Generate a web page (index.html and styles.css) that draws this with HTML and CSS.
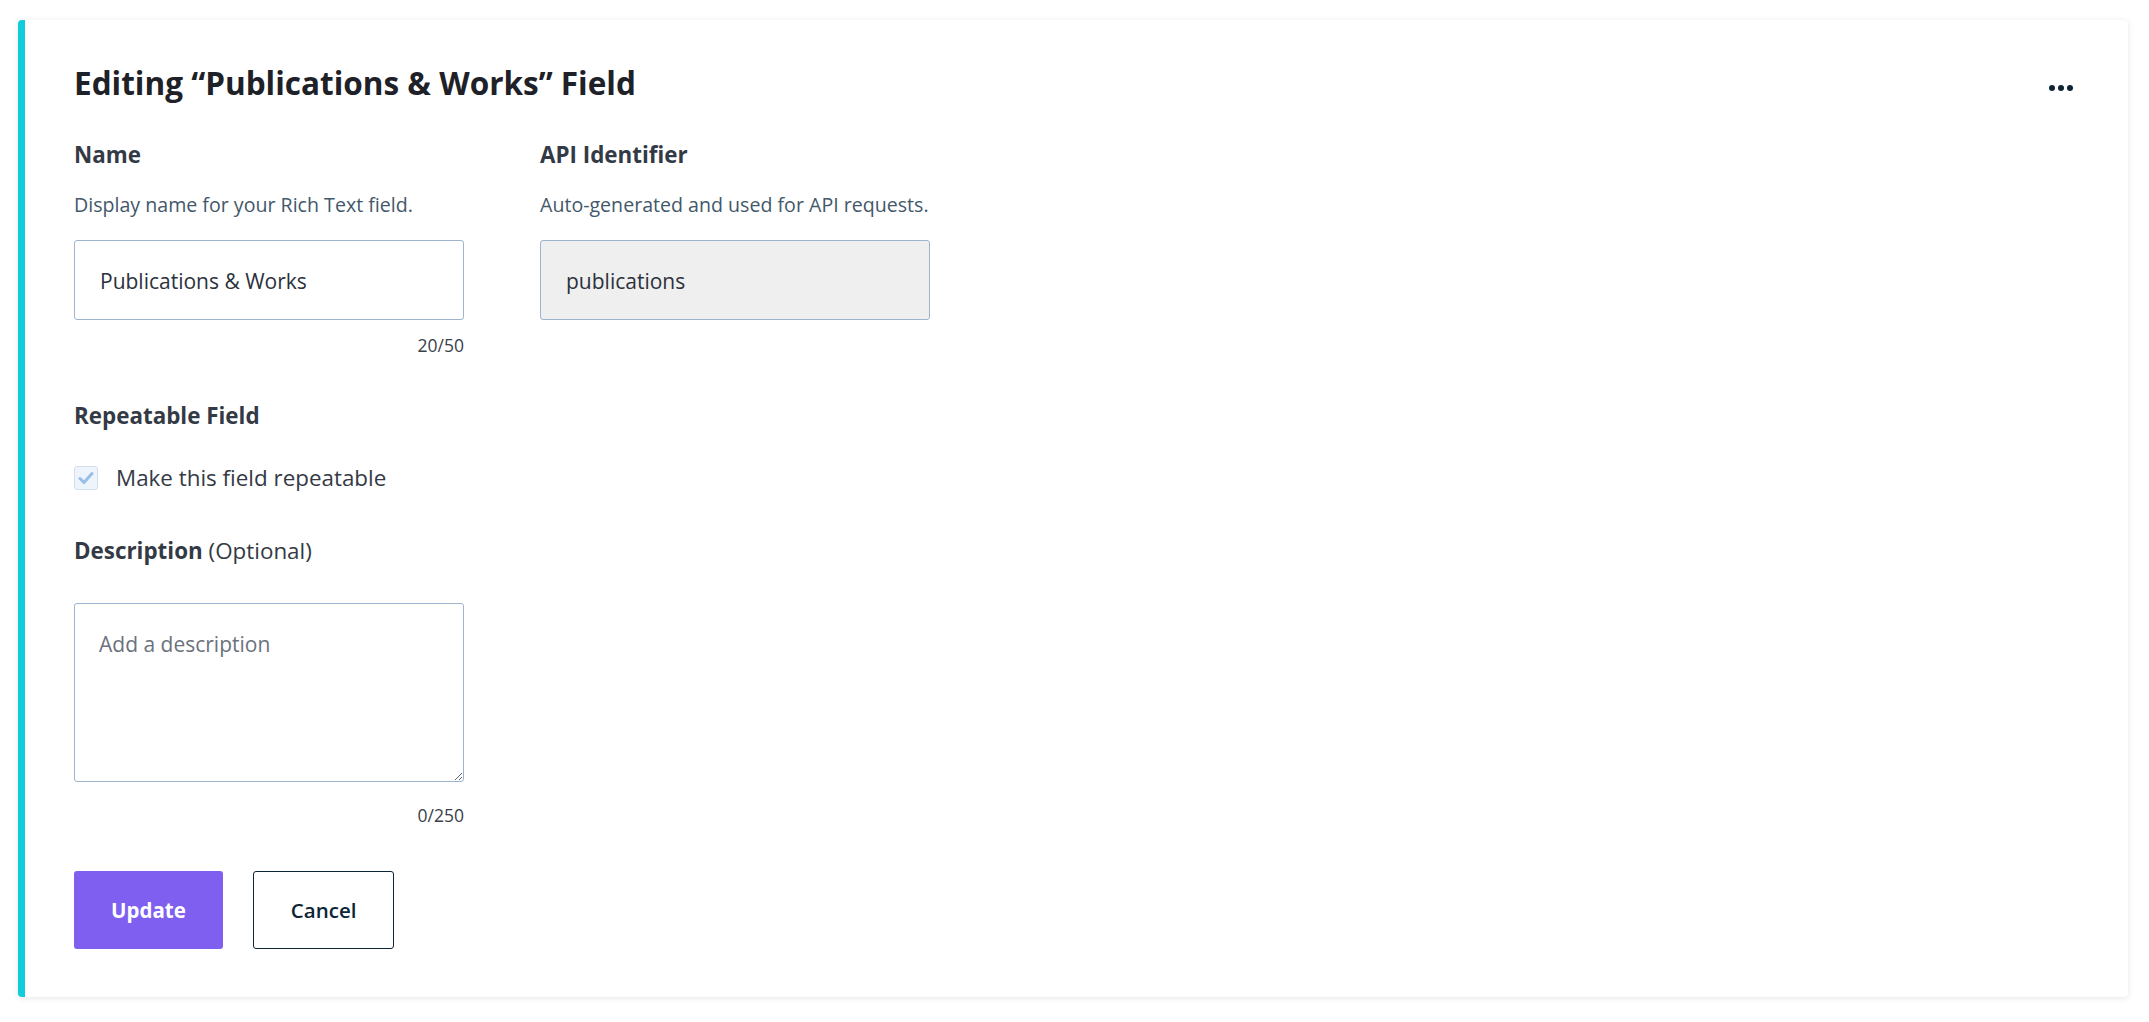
FILE: index.html
```html
<!DOCTYPE html>
<html lang="en">
<head>
<meta charset="utf-8">
<title>Editing Field</title>
<link rel="stylesheet" href="styles.css">
</head>
<body>
<div class="card">
  <div class="card-head">
    <h1 class="title">Editing “Publications &amp; Works” Field</h1>
    <button class="more" type="button" aria-label="More options">
      <svg width="24" height="6" viewBox="0 0 24 6"><circle cx="3" cy="3" r="3"/><circle cx="12" cy="3" r="3"/><circle cx="21" cy="3" r="3"/></svg>
    </button>
  </div>

  <div class="field-row">
    <div class="field">
      <div class="label">Name</div>
      <div class="hint">Display name for your Rich Text field.</div>
      <input class="text-input" type="text" value="Publications &amp; Works">
      <div class="counter">20/50</div>
    </div>
    <div class="field">
      <div class="label">API Identifier</div>
      <div class="hint">Auto-generated and used for API requests.</div>
      <input class="text-input is-disabled" type="text" value="publications" readonly>
    </div>
  </div>

  <div class="label label-repeat">Repeatable Field</div>
  <label class="check-row">
    <span class="checkbox">
      <svg width="16" height="14" viewBox="0 0 16 14"><path d="M2 7.5 L6 11.5 L14 2.5" fill="none" stroke="#98bfe6" stroke-width="3" stroke-linecap="round" stroke-linejoin="round"/></svg>
    </span>
    <span class="check-text">Make this field repeatable</span>
  </label>

  <div class="label label-desc">Description <span class="optional">(Optional)</span></div>
  <div class="field desc-field">
    <textarea class="textarea" placeholder="Add a description"></textarea>
    <div class="counter counter-desc">0/250</div>
  </div>

  <div class="actions">
    <button class="btn btn-primary" type="button">Update</button>
    <button class="btn btn-secondary" type="button">Cancel</button>
  </div>
</div>
</body>
</html>
```

FILE: styles.css
```css
* { box-sizing: border-box; }

html, body {
  margin: 0;
  background: #ffffff;
}

body {
  padding: 20px 21px 25px 18px;
  font-family: "Open Sans", "Noto Sans", sans-serif;
  color: #333a45;
}

.card {
  background: #ffffff;
  border-left: 7px solid #10cddb;
  border-radius: 4px;
  box-shadow: 0 1px 6px rgba(0, 0, 0, 0.10);
  padding: 42px 55px 48px 49px;
}

.card-head {
  display: flex;
  justify-content: space-between;
  align-items: flex-start;
}

.title {
  margin: 0;
  font-size: 31.5px;
  line-height: 42px;
  font-weight: 700;
  color: #1e2127;
}

.more {
  margin-top: 23px;
  padding: 0;
  border: 0;
  background: none;
  line-height: 0;
  fill: #0d2535;
}

.field-row {
  display: flex;
  gap: 76px;
  align-items: flex-start;
}

.field {
  display: flex;
  flex-direction: column;
  width: 390px;
}

.label {
  margin-top: 36px;
  font-size: 22.4px;
  line-height: 30px;
  font-weight: 700;
  color: #333a45;
}

.optional {
  font-weight: 400;
}

.hint {
  margin-top: 21px;
  font-size: 19.6px;
  line-height: 28px;
  color: #43586a;
}

.text-input {
  margin-top: 21px;
  width: 390px;
  height: 80px;
  padding: 2px 25px 0;
  border: 1.5px solid #9db4cf;
  border-radius: 3px;
  font-family: inherit;
  font-size: 21px;
  color: #2b313b;
  background: #ffffff;
  outline: none;
}

.text-input.is-disabled {
  background: #efefef;
}

.counter {
  margin-top: 13px;
  font-size: 17.5px;
  line-height: 24px;
  text-align: right;
  color: #3a404a;
}

.label-repeat {
  margin-top: 44px;
}

.check-row {
  margin-top: 32px;
  display: flex;
  align-items: center;
  height: 30px;
}

.checkbox {
  width: 24px;
  height: 24px;
  border: 1.5px solid #d3dfec;
  border-radius: 3px;
  background: #eef4fb;
  display: flex;
  align-items: center;
  justify-content: center;
}

.check-text {
  margin-left: 18px;
  font-size: 22.4px;
  line-height: 30px;
  color: #343a45;
}

.label-desc {
  margin-top: 43px;
}

.desc-field {
  margin-top: 37px;
}

.textarea {
  display: block;
  width: 390px;
  height: 179px;
  padding: 25px 24px 22px;
  border: 1.5px solid #9db4cf;
  border-radius: 3px;
  font-family: inherit;
  font-size: 21px;
  line-height: 31px;
  color: #2b313b;
  resize: both;
  outline: none;
}

.textarea::placeholder {
  color: #6b727c;
}

.counter-desc {
  margin-top: 21px;
}

.actions {
  margin-top: 44px;
  display: flex;
  gap: 30px;
}

.btn {
  height: 78px;
  padding: 0 37px;
  border-radius: 3px;
  font-family: inherit;
  font-size: 20.5px;
  font-weight: 600;
}

.btn-primary {
  padding: 0 37px;
  background: #7f5fef;
  border: 0;
  color: #ffffff;
  font-weight: 700;
}

.btn-secondary {
  background: #ffffff;
  border: 1.5px solid #0d2535;
  color: #0d2535;
}
```
